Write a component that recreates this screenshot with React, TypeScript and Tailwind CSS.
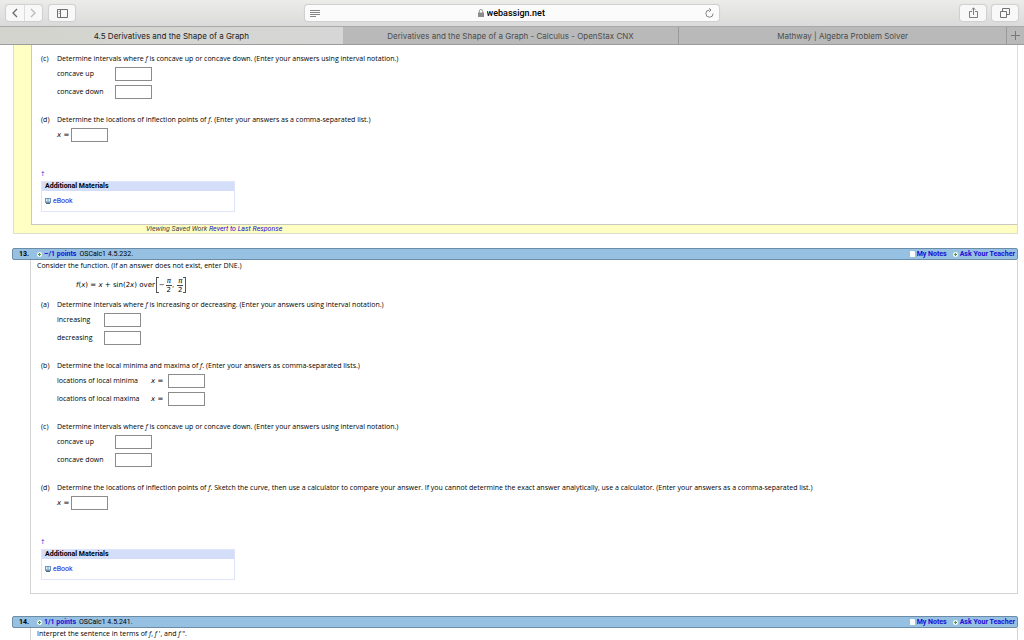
import React, { useId } from 'react';

interface AnswerRow {
  label?: string;
  showX?: boolean;
}

interface PartProps {
  letter: string;
  children: React.ReactNode;
  rows: AnswerRow[];
  labelWidth?: string;
}

interface QuestionBarProps {
  number: number;
  points: string;
  source: string;
}

function Toolbar() {
  return (
    <header className="flex h-[27px] shrink-0 items-center border-b border-[#a9a9a9] bg-linear-to-b from-[#ececea] to-[#dadada] px-[6px]">
      <div className="flex flex-1 items-center gap-[7px]">
        <div className="flex h-[16px] w-[36px] rounded-[3px] bg-[#f8f8f8] shadow-[0_0_1px_1px_#cfcfcf]">
          <button type="button" aria-label="Back" className="flex flex-1 items-center justify-center border-r border-[#dcdcdc]">
            <svg width="6" height="10" viewBox="0 0 6 10" fill="none" stroke="#6a6a6a" strokeWidth="1.3">
              <path d="M5 1 1 5l4 4" />
            </svg>
          </button>
          <button type="button" aria-label="Forward" className="flex flex-1 items-center justify-center">
            <svg width="6" height="10" viewBox="0 0 6 10" fill="none" stroke="#b9b9b9" strokeWidth="1.3">
              <path d="m1 1 4 4-4 4" />
            </svg>
          </button>
        </div>
        <button type="button" aria-label="Show sidebar" className="flex h-[16px] w-[26px] items-center justify-center rounded-[3px] bg-[#f8f8f8] shadow-[0_0_1px_1px_#cfcfcf]">
          <svg width="11" height="9" viewBox="0 0 11 9" fill="none" stroke="#6f6f6f">
            <path d="M.5.5h10v8H.5zM3.5.5v8" />
            <path d="M1.5 2.5h1.5M1.5 4.5h1.5" strokeWidth=".6" />
          </svg>
        </button>
      </div>
      <div className="flex h-[16px] w-[41%] items-center rounded-[3px] bg-[#fbfbfb] px-[5px] shadow-[0_0_1px_1px_#cfcfcf]">
        <button type="button" aria-label="Reader view" className="flex w-[12px] justify-start">
          <svg width="10" height="7" viewBox="0 0 10 7" stroke="#858585">
            <path d="M0 .5h10M0 2.5h10M0 4.5h10M0 6.5h6" />
          </svg>
        </button>
        <div className="flex min-w-0 flex-1 items-center justify-center gap-[3px]">
          <svg width="6" height="8" viewBox="0 0 6 8">
            <path d="M0 3.5h6V8H0z" fill="#8c8c8c" />
            <path d="M1.3 4V2.2a1.7 1.7 0 0 1 3.4 0V4" fill="none" stroke="#8c8c8c" strokeWidth=".9" />
          </svg>
          <input
            aria-label="Address"
            defaultValue="webassign.net"
            className="w-[60px] bg-transparent font-['Roboto',sans-serif] text-[9px] font-medium leading-[12px] text-black outline-none"
          />
        </div>
        <button type="button" aria-label="Reload" className="flex w-[12px] justify-end">
          <svg width="9" height="10" viewBox="0 0 9 10" fill="none" stroke="#777" strokeWidth=".9">
            <path d="M4.5 2A3.6 3.6 0 1 0 8.1 5.6M4.2.3 6 2 4.2 3.8" />
          </svg>
        </button>
      </div>
      <div className="flex flex-1 items-center justify-end gap-[6px]">
        <button type="button" aria-label="Share" className="flex h-[16px] w-[26px] items-center justify-center rounded-[3px] bg-[#f8f8f8] shadow-[0_0_1px_1px_#cfcfcf]">
          <svg width="9" height="12" viewBox="0 0 9 12" fill="none" stroke="#727272" strokeWidth=".9">
            <path d="M3 4.5H.5v6h8v-6H6M4.5 8V1M2.7 2.7 4.5.9l1.8 1.8" />
          </svg>
        </button>
        <button type="button" aria-label="Show all tabs" className="flex h-[16px] w-[26px] items-center justify-center rounded-[3px] bg-[#f8f8f8] shadow-[0_0_1px_1px_#cfcfcf]">
          <svg width="10" height="10" viewBox="0 0 10 10" fill="none" stroke="#727272">
            <path d="M.5 3.5h6v6h-6zM2.5 3.5v-3h7v6h-3" />
          </svg>
        </button>
      </div>
    </header>
  );
}

function TabStrip() {
  return (
    <nav className="flex h-[18px] shrink-0 border-b border-[#9c9c9c] bg-[#b9b9b9] font-['Inter',sans-serif] text-[8px] text-[#4c4c4c]">
      <button type="button" className="min-w-0 flex-[343_1_0%] truncate bg-linear-to-r from-[#d4d4ce] to-[#d6d6d6] text-[#222]">
        4.5 Derivatives and the Shape of a Graph
      </button>
      <button type="button" className="min-w-0 flex-[336_1_0%] truncate border-r border-[#999]">
        Derivatives and the Shape of a Graph - Calculus - OpenStax CNX
      </button>
      <button type="button" className="min-w-0 flex-[327_1_0%] truncate border-r border-[#999]">
        Mathway | Algebra Problem Solver
      </button>
      <button type="button" aria-label="New tab" className="flex w-[17px] items-center justify-center">
        <svg width="9" height="9" viewBox="0 0 9 9" stroke="#777">
          <path d="M4.5 0v9M0 4.5h9" />
        </svg>
      </button>
    </nav>
  );
}

function PlusIcon() {
  return (
    <svg width="5" height="5" viewBox="0 0 5 5" className="shrink-0">
      <circle cx="2.5" cy="2.5" r="2.5" fill="#f3f8ee" />
      <path d="M2.5 1v3M1 2.5h3" stroke="#4f9a4a" strokeWidth="1" />
    </svg>
  );
}

function QuestionBar({ number, points, source }: QuestionBarProps) {
  return (
    <div className="flex h-[12px] items-center rounded-[2px] border border-[#6d8ca6] bg-[#97c1e3] pl-[6px] pr-[2px] font-['Roboto',sans-serif] text-[7px] leading-[10px] text-black">
      <h2 className="w-[18px] font-bold">{number}.</h2>
      <a href="#points" className="flex items-center gap-[2px] font-bold text-[#1a0dd8]">
        <PlusIcon />
        {points}
      </a>
      <span className="ml-[3px]">{source}</span>
      <div className="ml-auto flex items-center gap-[6px] font-bold text-[#1a0dd8]">
        <a href="#notes" className="flex items-center gap-[2px]">
          <svg width="5" height="6" viewBox="0 0 5 6">
            <path d="M0 0h4l1 1v5H0z" fill="#fff" />
          </svg>
          My Notes
        </a>
        <a href="#ask" className="flex items-center gap-[2px]">
          <PlusIcon />
          Ask Your Teacher
        </a>
      </div>
    </div>
  );
}

function AnswerField({ label, showX, labelWidth }: AnswerRow & { labelWidth?: string }) {
  const id = useId();
  return (
    <div className="flex h-[18px] items-center">
      <label htmlFor={id} className="flex items-center">
        {label && <span className={labelWidth}>{label}</span>}
        {showX && (
          <span className={label ? "w-[17px] font-['DejaVu_Sans',sans-serif]" : "w-[14px] font-['DejaVu_Sans',sans-serif]"}>
            <i>x</i> =
          </span>
        )}
      </label>
      <input id={id} type="text" className="h-[14px] w-[37px] border border-[#8b8b8b] bg-white px-[2px] outline-none" />
    </div>
  );
}

function Part({ letter, children, rows, labelWidth }: PartProps) {
  return (
    <section className="mb-[12px] flex">
      <span className="w-[16px] shrink-0 leading-[13px]">({letter})</span>
      <div className="min-w-0">
        <p className="leading-[13px]">{children}</p>
        {rows.map((row, i) => (
          <AnswerField key={i} {...row} labelWidth={labelWidth} />
        ))}
      </div>
    </section>
  );
}

function ConcavityPart() {
  return (
    <Part letter="c" labelWidth="w-[58px]" rows={[{ label: 'concave up' }, { label: 'concave down' }]}>
      Determine intervals where <i>f</i> is concave up or concave down. (Enter your answers using interval notation.)
    </Part>
  );
}

function Materials() {
  return (
    <div className="pt-[13px]">
      <a href="#footnote" className="block h-[12px] leading-[10px] text-[#1a0dd8]">†</a>
      <div className="h-[31px] w-[194px] border border-[#dfe5f8] font-['Roboto',sans-serif]">
        <h3 className="h-[9px] bg-[#d5def8] pl-[3px] font-bold leading-[9px]">Additional Materials</h3>
        <a href="#ebook" className="flex h-[20px] items-center gap-[2px] pl-[3px] text-[#1a0dd8]">
          <svg width="6" height="6" viewBox="0 0 6 6">
            <path d="M0 0h6v5H0z" fill="#6f97b5" />
            <path d="M1 1h1.6v2.5H1zM3.4 1H5v2.5H3.4z" fill="#dcebf5" />
            <path d="M1 5.5h4" stroke="#456a86" />
          </svg>
          eBook
        </a>
      </div>
    </div>
  );
}

function Fraction() {
  return (
    <span className="inline-flex flex-col items-center leading-[8px]">
      <i className="border-b border-[#444] px-[1px]">π</i>
      <span>2</span>
    </span>
  );
}

function Formula() {
  return (
    <div className="flex h-[26px] items-center pl-[39px] font-['DejaVu_Sans',sans-serif]">
      <span><i>f</i>(<i>x</i>) = <i>x</i> + sin(2<i>x</i>) over</span>
      <span className="ml-[1px] flex h-[17px] items-center">
        <span className="h-[16px] w-[3px] border-y border-l border-[#555]" />
        <span>−</span>
        <span className="ml-[1px]"><Fraction /></span>
        <span className="mr-[3px]">,</span>
        <Fraction />
        <span className="h-[16px] w-[3px] border-y border-r border-[#555]" />
      </span>
    </div>
  );
}

export default function App() {
  return (
    <div className="flex h-screen flex-col overflow-hidden bg-white">
      <Toolbar />
      <TabStrip />
      <main className="min-h-0 flex-1 overflow-hidden pl-[12px] pr-[6px] font-['Open_Sans',sans-serif] text-[7px] leading-[10px] text-black">
        <article className="ml-[1px] border-x border-b border-[#deded0] bg-[#ffffc4] pl-[17px]">
          <div className="border-b border-l border-[#c9c9c0] bg-white pb-[12px] pl-[9px] pt-[7px]">
            <ConcavityPart />
            <Part letter="d" rows={[{ showX: true }]}>
              Determine the locations of inflection points of <i>f</i>. (Enter your answers as a comma-separated list.)
            </Part>
            <Materials />
          </div>
          <p className="h-[8px] pl-[115px] font-['Roboto',sans-serif] italic leading-[8px] text-[#444]">
            Viewing Saved Work <a href="#revert" className="text-[#1a0dd8]">Revert to Last Response</a>
          </p>
        </article>

        <article className="mt-[14px]">
          <QuestionBar number={13} points="–/1 points" source="OSCalc1 4.5.232." />
          <div className="ml-[18px] border-x border-b border-[#d2d2d2] pb-[13px] pl-[6px]">
            <p className="leading-[12px]">Consider the function. (If an answer does not exist, enter DNE.)</p>
            <Formula />
            <div className="pl-[4px]">
              <Part letter="a" labelWidth="w-[47px]" rows={[{ label: 'increasing' }, { label: 'decreasing' }]}>
                Determine intervals where <i>f</i> is increasing or decreasing. (Enter your answers using interval notation.)
              </Part>
              <Part
                letter="b"
                labelWidth="w-[94px]"
                rows={[{ label: 'locations of local minima', showX: true }, { label: 'locations of local maxima', showX: true }]}
              >
                Determine the local minima and maxima of <i>f</i>. (Enter your answers as comma-separated lists.)
              </Part>
              <ConcavityPart />
              <Part letter="d" rows={[{ showX: true }]}>
                Determine the locations of inflection points of <i>f</i>. Sketch the curve, then use a calculator to compare your
                answer. If you cannot determine the exact answer analytically, use a calculator. (Enter your answers as a
                comma-separated list.)
              </Part>
              <Materials />
            </div>
          </div>
        </article>

        <article className="mt-[22px]">
          <QuestionBar number={14} points="1/1 points" source="OSCalc1 4.5.241." />
          <div className="ml-[18px] border-x border-[#d2d2d2] pb-[13px] pl-[6px]">
            <p className="leading-[12px]">Interpret the sentence in terms of <i>f</i>, <i>f</i> ', and <i>f</i> ".</p>
          </div>
        </article>
      </main>
    </div>
  );
}
